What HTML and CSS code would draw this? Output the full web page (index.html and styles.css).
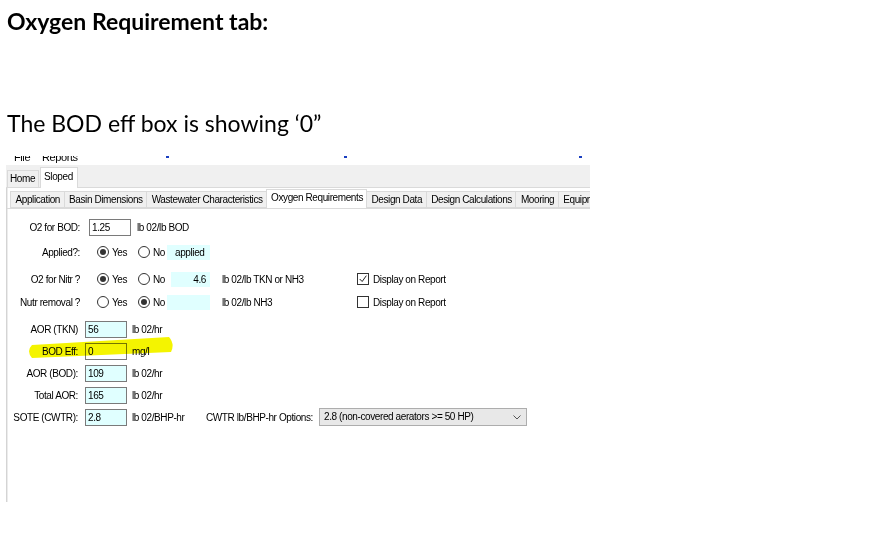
FILE: index.html
```html
<!DOCTYPE html>
<html>
<head>
<meta charset="utf-8">
<link rel="stylesheet" href="styles.css">
</head>
<body>
<div class="doc">
  <h1 class="title">Oxygen Requirement tab:</h1>
  <p class="note">The BOD eff box is showing ‘0”</p>

  <div class="shot">
    <div class="menu">
      <span class="mi mi-file">File</span>
      <span class="mi mi-rep">Reports</span>
      <span class="blip"></span>
      <span class="gap178"></span>
      <span class="blip"></span>
      <span class="gap230"></span>
      <span class="blip"></span>
    </div>

    <div class="toptabs">
      <span class="ttab">Home</span>
      <span class="ttab sel">Sloped</span>
    </div>

    <div class="page">
      <div class="subtabs">
        <span class="stab">Application</span>
        <span class="stab">Basin Dimensions</span>
        <span class="stab">Wastewater Characteristics</span>
        <span class="stab sel">Oxygen Requirements</span>
        <span class="stab">Design Data</span>
        <span class="stab">Design Calculations</span>
        <span class="stab">Mooring</span>
        <span class="stab cut">Equipm</span>
      </div>

      <div class="content">
        <div class="row r1">
          <span class="lbl wa">O2 for BOD:</span>
          <span class="field plain ml9">1.25</span>
          <span class="unit ml6">lb 02/lb BOD</span>
        </div>

        <div class="row r2">
          <span class="lbl wa">Applied?:</span>
          <span class="radios">
            <span class="opt yes"><i class="radio on"></i>Yes</span>
            <span class="opt no"><i class="radio"></i>No</span>
          </span>
          <span class="cbox txt">applied</span>
        </div>

        <div class="row r3">
          <span class="lbl wa">O2 for Nitr ?</span>
          <span class="radios">
            <span class="opt yes"><i class="radio on"></i>Yes</span>
            <span class="opt no"><i class="radio"></i>No</span>
          </span>
          <span class="cbox num">4.6</span>
          <span class="unit ml12 wu">lb 02/lb TKN or NH3</span>
          <span class="chk"><i class="check on"><svg viewBox="0 0 12 12" width="10" height="10"><polyline points="2,6 5,9 10,2" fill="none" stroke="#222" stroke-width="1.2"/></svg></i>Display on Report</span>
        </div>

        <div class="row r4">
          <span class="lbl wa">Nutr removal ?</span>
          <span class="radios">
            <span class="opt yes"><i class="radio"></i>Yes</span>
            <span class="opt no"><i class="radio on"></i>No</span>
          </span>
          <span class="cbox"></span>
          <span class="unit ml12 wu">lb 02/lb NH3</span>
          <span class="chk"><i class="check"></i>Display on Report</span>
        </div>

        <div class="row r5">
          <span class="lbl wb">AOR (TKN)</span>
          <span class="field ml7">56</span>
          <span class="unit ml5">lb 02/hr</span>
        </div>

        <div class="row r6">
          <span class="lbl wb">BOD Eff:</span>
          <span class="field ml7 clear">0</span>
          <span class="unit ml5">mg/l</span>
        </div>

        <div class="row r7">
          <span class="lbl wb">AOR (BOD):</span>
          <span class="field ml7">109</span>
          <span class="unit ml5">lb 02/hr</span>
        </div>

        <div class="row r8">
          <span class="lbl wb">Total AOR:</span>
          <span class="field ml7">165</span>
          <span class="unit ml5">lb 02/hr</span>
        </div>

        <div class="row r9">
          <span class="lbl wb">SOTE (CWTR):</span>
          <span class="field ml7">2.8</span>
          <span class="unit ml5 wv">lb 02/BHP-hr</span>
          <span class="optlbl">CWTR lb/BHP-hr Options:</span>
          <span class="select">2.8 (non-covered aerators &gt;= 50 HP)<svg class="chev" viewBox="0 0 8 5" width="8" height="5"><polyline points="0.5,0.5 4,4 7.5,0.5" fill="none" stroke="#555" stroke-width="1"/></svg></span>
        </div>
      </div>
    </div>

    <svg class="hilite" width="584" height="360" viewBox="0 0 584 360">
      <path d="M26,189 L163,181 Q169,188 165,196 L26,202 Q20,195 26,189 Z" fill="#f4f400"/>
    </svg>
  </div>
</div>
</body>
</html>
```

FILE: styles.css
```css
body {
  margin: 0;
  background: #fff;
}

.doc {
  font-family: Lato, "Liberation Sans", sans-serif;
  color: #000;
}

.title {
  margin: 0;
  padding: 7px 0 0 7px;
  font-size: 23px;
  font-weight: 700;
  line-height: 28px;
}

.note {
  margin: 74px 0 0 7px;
  font-size: 23px;
  line-height: 28px;
}

.shot {
  position: relative;
  margin: 19px 0 0 6px;
  width: 584px;
  font-family: "Liberation Sans", Arial, sans-serif;
  font-size: 10px;
  letter-spacing: -0.4px;
  color: #000;
}

/* menu strip (cut off at the top) */
.menu {
  height: 9px;
  overflow: hidden;
  background: #fff;
  display: flex;
  align-items: flex-end;
}
.mi {
  flex: none;
  font-size: 11px;
  line-height: 11px;
  margin-bottom: 2px;
}
.mi-file { padding-left: 8px; width: 28px; }
.mi-rep { width: 124px; }
.blip {
  flex: none;
  width: 3px;
  height: 2px;
  background: #1a3fc0;
  align-self: flex-start;
}
.gap178 { flex: none; width: 175px; }
.gap230 { flex: none; width: 232px; }

/* top tabs */
.toptabs {
  height: 22px;
  background: #f0f0f0;
  display: flex;
  align-items: flex-end;
  padding-left: 1px;
  border-bottom: 1px solid #dadada;
}
.ttab {
  flex: none;
  height: 17px;
  line-height: 16px;
  padding: 0 3px 0 2px;
  border: 1px solid #dadada;
  border-bottom: none;
  box-sizing: border-box;
}
.ttab.sel {
  height: 21px;
  line-height: 18px;
  background: #fff;
  margin-bottom: -1px;
  padding: 0 4px 0 3px;
  margin-left: 1px;
}

/* page */
.page {
  height: 314px;
  border-left: 1px solid #d4d4d4;
  box-shadow: inset 1px 0 0 #ececec;
  background: #fff;
}

.subtabs {
  height: 20px;
  display: flex;
  align-items: flex-end;
  padding-left: 3px;
  border-bottom: 1px solid #dadada;
  overflow: hidden;
}
.stab {
  flex: none;
  height: 17px;
  line-height: 16px;
  padding: 0 3.5px 0 4.5px;
  background: #f0f0f0;
  border: 1px solid #dadada;
  border-right: none;
  box-sizing: border-box;
  white-space: nowrap;
}
.stab.sel {
  height: 20px;
  line-height: 16px;
  background: #fff;
  border-right: 1px solid #dadada;
  margin-bottom: -1px;
  padding: 0 3px 3px 4px;
}
.stab.sel + .stab { border-left: none; }

/* form */
.content {
  padding-top: 8px;
  padding-left: 1px;
}
.row {
  display: flex;
  align-items: center;
  height: 20px;
  white-space: nowrap;
}
.r2 { margin-top: 5px; }
.r3 { margin-top: 7px; }
.r4 { margin-top: 3px; }
.r5 { margin-top: 7px; }
.r6, .r7, .r8, .r9 { margin-top: 2px; }

.lbl {
  flex: none;
  text-align: right;
}
.wa { width: 72px; }
.wb { width: 70px; }

.ml5 { margin-left: 5px; }
.ml6 { margin-left: 6px; }
.ml7 { margin-left: 7px; }
.ml9 { margin-left: 9px; }
.ml12 { margin-left: 12px; }

.field {
  flex: none;
  width: 42px;
  height: 17px;
  box-sizing: border-box;
  border: 1px solid #7a7a7a;
  background: #e0ffff;
  padding-left: 2px;
  line-height: 15px;
}
.field.plain { background: #fff; }
.field.clear { background: transparent; }

.unit { flex: none; }
.wu { width: 135px; }
.wv { width: 74px; }

.radios {
  flex: none;
  display: flex;
  margin-left: 17px;
}
.opt {
  flex: none;
  display: flex;
  align-items: center;
}
.opt.yes { width: 41px; }
.opt.no { width: 29px; }
.radio {
  flex: none;
  width: 12px;
  height: 12px;
  box-sizing: border-box;
  border: 1px solid #333;
  border-radius: 50%;
  background: #fff;
  margin-right: 3px;
  display: flex;
  align-items: center;
  justify-content: center;
}
.radio.on::after {
  content: "";
  width: 6px;
  height: 6px;
  border-radius: 50%;
  background: #333;
}

.cbox {
  flex: none;
  width: 43px;
  height: 15px;
  background: #e0ffff;
  line-height: 15px;
  box-sizing: border-box;
}
.cbox.txt { padding-left: 8px; }
.cbox.num {
  width: 39px;
  margin-left: 4px;
  text-align: right;
  padding-right: 4px;
}

.chk {
  flex: none;
  display: flex;
  align-items: center;
}
.check {
  flex: none;
  width: 12px;
  height: 12px;
  box-sizing: border-box;
  border: 1px solid #333;
  background: #fff;
  margin-right: 4px;
  display: flex;
  align-items: center;
  justify-content: center;
}

.optlbl {
  flex: none;
  width: 113px;
}
.select {
  flex: none;
  width: 208px;
  height: 18px;
  box-sizing: border-box;
  border: 1px solid #adadad;
  background: #e8e8e8;
  padding-left: 4px;
  line-height: 16px;
  display: flex;
  align-items: center;
  justify-content: space-between;
}
.chev {
  margin-right: 5px;
}

.hilite {
  position: absolute;
  left: 0;
  top: 0;
  mix-blend-mode: multiply;
  pointer-events: none;
}
```
